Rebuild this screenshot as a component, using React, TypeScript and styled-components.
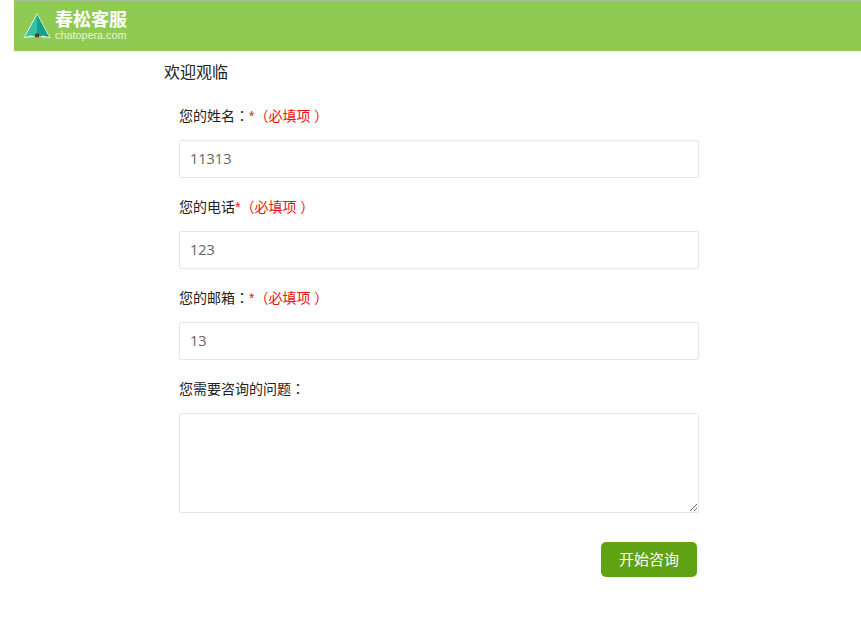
import React, { useState } from 'react';
import styled, { createGlobalStyle } from 'styled-components';

const GlobalStyle = createGlobalStyle`
  html, body {
    margin: 0;
    padding: 0;
    background: #fff;
    font-family: "Liberation Sans", "Noto Sans CJK SC", sans-serif;
    color: #222;
  }
`;

const fields = [
  { id: 'name', label: '您的姓名', colon: true, value: '11313' },
  { id: 'phone', label: '您的电话', colon: false, value: '123' },
  { id: 'mail', label: '您的邮箱', colon: true, value: '13' },
];

const App = () => {
  const [values, setValues] = useState<Record<string, string>>({
    name: '11313',
    phone: '123',
    mail: '13',
  });

  const handleChange = (event: React.ChangeEvent<HTMLInputElement>) => {
    const { name, value } = event.target;
    setValues(prev => ({ ...prev, [name]: value }));
  };

  return (
    <Page>
      <GlobalStyle />
      <Header>
        <svg width="28" height="28" viewBox="0 0 28 28">
          <path d="M14 1 L27.5 26 L17 25 L14 26 L11 25 L0.5 26 Z" fill="#f2fae6" />
          <path d="M14 2.5 L26 25 L20 23.5 L17 24.5 L14 23.5 L11 24.5 L8 23.5 L2 25 Z" fill="#33c4a6" />
          <path d="M14 2.5 L26 25 L20 23.5 L17 24.5 L14 23.5 Z" fill="#14a08c" />
          <path d="M12 21.5 h4 v4 h-4 Z" fill="#5b3a22" />
        </svg>
        <Brand>
          <BrandName>春松客服</BrandName>
          <BrandSite>chatopera.com</BrandSite>
        </Brand>
      </Header>
      <Content>
        <Title>欢迎观临</Title>
        <form onSubmit={event => event.preventDefault()}>
          {fields.map(field => (
            <Field key={field.id}>
              <Label>
                {field.label}
                {field.colon && <Colon>：</Colon>}
                <Required>*（必填项 ）</Required>
              </Label>
              <Input name={field.id} value={values[field.id]} onChange={handleChange} />
            </Field>
          ))}
          <Field>
            <Label>您需要咨询的问题<Colon>：</Colon></Label>
            <TextArea />
          </Field>
          <Actions>
            <SubmitButton type="submit">开始咨询</SubmitButton>
          </Actions>
        </form>
      </Content>
    </Page>
  );
};

const Page = styled.div`
  width: 861px;
  height: 641px;
  overflow: hidden;
`;

const Header = styled.header`
  margin-left: 14px;
  height: 50px;
  border-top: 1px solid #a9bd96;
  background: #8fcb53;
  display: flex;
  align-items: center;
  gap: 4px;
  padding-left: 9px;
`;

const Brand = styled.div`
  display: flex;
  flex-direction: column;
  gap: 1px;
  color: #fff;
`;

const BrandName = styled.div`
  font-size: 18px;
  line-height: 18px;
  font-weight: 700;
  width: 76px;
`;

const BrandSite = styled.div`
  font-size: 10.8px;
  line-height: 11px;
  color: #e6f4d6;
`;

const Content = styled.main`
  width: 540px;
  margin-left: 164px;
  padding-top: 11px;
`;

const Title = styled.div`
  font-size: 16px;
  line-height: 22px;
  margin-bottom: 22px;
`;

const Field = styled.div`
  padding-left: 15px;
  margin-bottom: 19px;
`;

const Label = styled.label`
  display: block;
  font-size: 14px;
  line-height: 20px;
  height: 20px;
  margin-bottom: 14px;
`;

const Colon = styled.span`
  font-family: "Noto Sans CJK TC", sans-serif;
  line-height: 1;
`;

const Required = styled.span`
  color: #ee1111;
`;

const Input = styled.input`
  display: block;
  box-sizing: border-box;
  width: 520px;
  height: 38px;
  padding: 0 10px 2px;
  border: 1px solid #e6e6e6;
  border-radius: 2px;
  font-family: "Open Sans", sans-serif;
  font-size: 14.5px;
  color: #666;
  outline: none;
`;

const TextArea = styled.textarea`
  display: block;
  box-sizing: border-box;
  width: 520px;
  height: 100px;
  border: 1px solid #e6e6e6;
  border-radius: 2px;
  outline: none;
`;

const Actions = styled.div`
  display: flex;
  justify-content: flex-end;
  width: 533px;
  margin-top: 29px;
`;

const SubmitButton = styled.button`
  width: 96px;
  height: 35px;
  padding: 0 0 2px;
  border: none;
  border-radius: 5px;
  background: #5fa213;
  color: #fff;
  font-family: inherit;
  font-size: 15px;
`;

export default App;
